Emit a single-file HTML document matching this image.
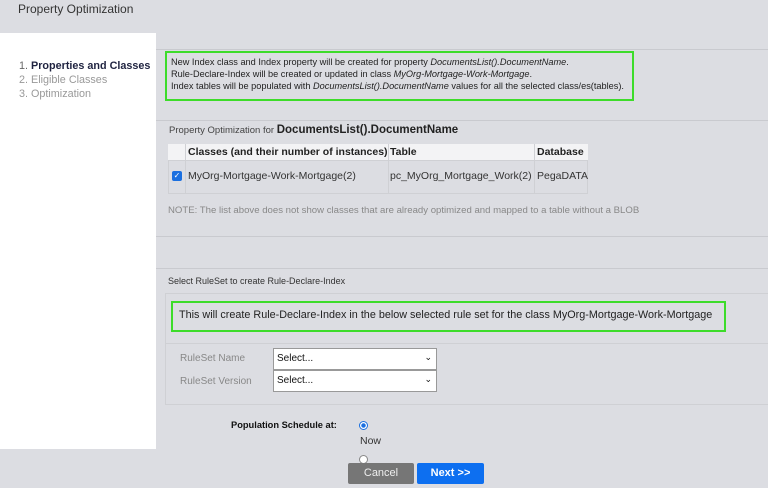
<!DOCTYPE html>
<html><head><style>
*{margin:0;padding:0;box-sizing:border-box}
body{width:768px;height:488px;background:#dcdde2;font-family:"Liberation Sans",sans-serif;position:relative;overflow:hidden;color:#222}
.a{position:absolute;white-space:nowrap}
.hl{position:absolute;left:156px;right:0;height:1px;background:#c9cacf}
</style></head><body>
<div class="a" style="left:18px;top:2px;font-size:12px;color:#333">Property Optimization</div>
<div class="a" style="left:0;top:33px;width:156px;height:416px;background:#fff"></div>
<div class="a" style="left:19px;top:59px;font-size:10.8px;line-height:14px;color:#666">1. <b style="color:#1f2340">Properties and Classes</b><br><span style="color:#999">2. Eligible Classes</span><br><span style="color:#999">3. Optimization</span></div>
<div class="hl" style="top:49px"></div>
<div class="a" style="left:165px;top:51px;width:469px;height:50px;border:2px solid #3ddc2a;font-size:9.2px;line-height:12px;padding:3px 4px;color:#222">New Index class and Index property will be created for property <i>DocumentsList().DocumentName</i>.<br>Rule-Declare-Index will be created or updated in class <i>MyOrg-Mortgage-Work-Mortgage</i>.<br>Index tables will be populated with <i>DocumentsList().DocumentName</i> values for all the selected class/es(tables).</div>
<div class="hl" style="top:120px"></div>
<div class="a" style="left:169px;top:124px;font-size:9.5px;color:#444">Property Optimization for <b style="font-size:11.5px;color:#222">DocumentsList().DocumentName</b></div>
<div class="a" style="left:168px;top:144px;width:420px;height:16px;background:#f3f3f5"></div>
<div class="a" style="left:168px;top:160px;width:420px;height:34px;border:1px solid #cfd0d4"></div>
<div class="a" style="left:185px;top:144px;width:1px;height:50px;background:#cfd0d4"></div>
<div class="a" style="left:388px;top:144px;width:1px;height:50px;background:#cfd0d4"></div>
<div class="a" style="left:534px;top:144px;width:1px;height:50px;background:#cfd0d4"></div>
<div class="a" style="left:188px;top:146px;font-size:10.5px;font-weight:bold;color:#222">Classes (and their number of instances)</div>
<div class="a" style="left:390px;top:146px;font-size:10.5px;font-weight:bold">Table</div>
<div class="a" style="left:537px;top:146px;font-size:10.5px;font-weight:bold">Database</div>
<div class="a" style="left:172px;top:171px;width:10px;height:10px;background:#1a6fe0;border-radius:2px;color:#fff;font-size:8px;line-height:10px;text-align:center">✓</div>
<div class="a" style="left:188px;top:170px;font-size:10.5px;color:#333">MyOrg-Mortgage-Work-Mortgage(2)</div>
<div class="a" style="left:390px;top:170px;font-size:10.5px;color:#333">pc_MyOrg_Mortgage_Work(2)</div>
<div class="a" style="left:537px;top:170px;font-size:10.5px;color:#333">PegaDATA</div>
<div class="a" style="left:168px;top:205px;font-size:9.6px;color:#888">NOTE: The list above does not show classes that are already optimized and mapped to a table without a BLOB</div>
<div class="hl" style="top:236px"></div>
<div class="hl" style="top:268px"></div>
<div class="a" style="left:168px;top:276px;font-size:9px;color:#333">Select RuleSet to create Rule-Declare-Index</div>
<div class="a" style="left:165px;top:293px;width:603px;height:112px;border:1px solid #cfd0d4;border-right:none"></div>
<div class="a" style="left:165px;top:343px;width:603px;height:1px;background:#cfd0d4"></div>
<div class="a" style="left:171px;top:301px;width:555px;height:31px;border:2px solid #3ddc2a;font-size:10.8px;padding:6px 6px;color:#222">This will create Rule-Declare-Index in the below selected rule set for the class MyOrg-Mortgage-Work-Mortgage</div>
<div class="a" style="left:180px;top:353px;font-size:10px;color:#888">RuleSet Name</div>
<div class="a" style="left:180px;top:376px;font-size:10px;color:#888">RuleSet Version</div>
<div class="a" style="left:273px;top:348px;width:164px;height:22px;background:#fff;border:1px solid #999;font-size:10px;padding:4px 3px;color:#111">Select...<span style="position:absolute;right:4px;top:3px;font-size:9px">⌄</span></div>
<div class="a" style="left:273px;top:370px;width:164px;height:22px;background:#fff;border:1px solid #999;font-size:10px;padding:4px 3px;color:#111">Select...<span style="position:absolute;right:4px;top:3px;font-size:9px">⌄</span></div>
<div class="a" style="left:231px;top:420px;font-size:9.3px;font-weight:bold;color:#111">Population Schedule at:</div>
<div class="a" style="left:359px;top:421px;width:9px;height:9px;border-radius:50%;border:1px solid #1a6fe0;background:radial-gradient(#1a6fe0 40%,#fff 50%)"></div>
<div class="a" style="left:360px;top:435px;font-size:10.5px;color:#333">Now</div>
<div class="a" style="left:359px;top:455px;width:9px;height:9px;border-radius:50%;border:1px solid #888;background:#fff"></div>
<div class="a" style="left:348px;top:463px;width:66px;height:21px;background:#767676;border-radius:2px;color:#eee;font-size:11px;text-align:center;line-height:21px">Cancel</div>
<div class="a" style="left:417px;top:463px;width:67px;height:21px;background:#0d6ff0;border-radius:2px;color:#fff;font-size:11px;font-weight:bold;text-align:center;line-height:21px">Next &gt;&gt;</div>
</body></html>
